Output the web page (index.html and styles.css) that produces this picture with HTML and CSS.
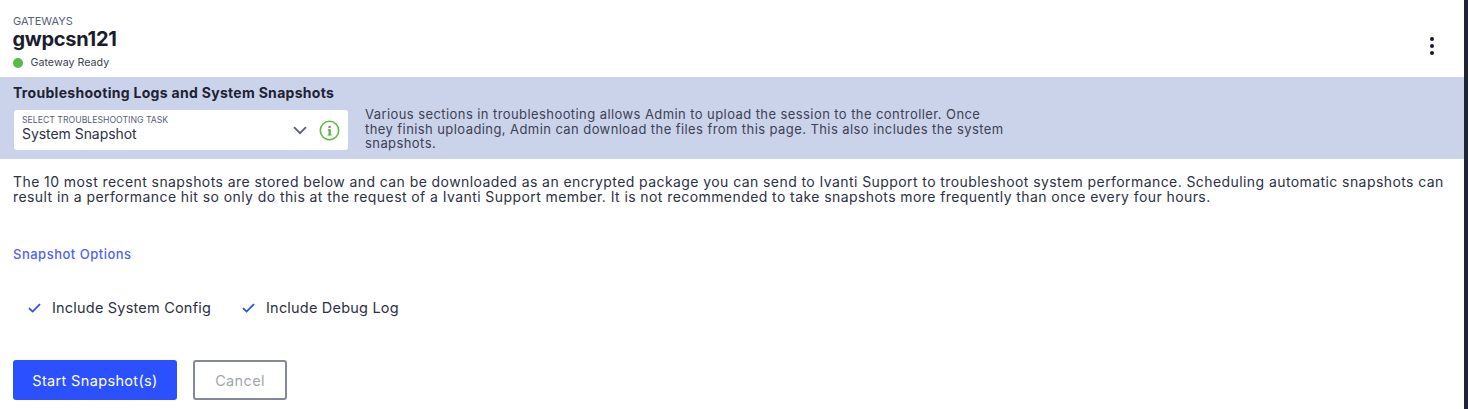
FILE: index.html
```html
<!DOCTYPE html>
<html lang="en">
<head>
<meta charset="utf-8">
<title>gwpcsn121</title>
<link rel="stylesheet" href="styles.css">
</head>
<body>
<div class="page">
  <header class="head">
    <div class="head-text">
      <div class="crumb">GATEWAYS</div>
      <h1 class="name">gwpcsn121</h1>
      <div class="status"><span class="dot"></span><span>Gateway Ready</span></div>
    </div>
    <div class="kebab"><span></span><span></span><span></span></div>
  </header>
  <section class="band">
    <h2 class="band-title">Troubleshooting Logs and System Snapshots</h2>
    <div class="band-row">
      <div class="select">
        <div class="select-text">
          <div class="select-label">SELECT TROUBLESHOOTING TASK</div>
          <div class="select-value">System Snapshot</div>
        </div>
        <svg class="chev" width="14" height="9" viewBox="0 0 14 9"><path d="M1 1.2 7 7.2 13 1.2" fill="none" stroke="#5a6078" stroke-width="1.8"/></svg>
        <svg class="info" width="21" height="21" viewBox="0 0 21 21"><circle cx="10.5" cy="10.5" r="9.2" fill="none" stroke="#5cb946" stroke-width="1.6"/><rect x="9.5" y="5.8" width="2.2" height="2.2" fill="#4ea83a"/><path d="M8.8 9.3h2.9v5.2h1v1.1H8.6v-1.1h1v-4.1h-.8z" fill="#4ea83a"/></svg>
      </div>
      <p class="band-desc">Various sections in troubleshooting allows Admin to upload the session to the controller. Once they finish uploading, Admin can download the files from this page. This also includes the system snapshots.</p>
    </div>
  </section>
  <main class="content">
    <p class="intro">The 10 most recent snapshots are stored below and can be downloaded as an encrypted package you can send to Ivanti Support to troubleshoot system performance. Scheduling automatic snapshots can result in a performance hit so only do this at the request of a Ivanti Support member. It is not recommended to take snapshots more frequently than once every four hours.</p>
    <h3 class="options-title">Snapshot Options</h3>
    <div class="options">
      <div class="option"><svg width="13" height="10" viewBox="0 0 13 10"><path d="M1 5.2 4.6 8.6 12 1.2" fill="none" stroke="#2b50f5" stroke-width="1.8"/></svg><span>Include System Config</span></div>
      <div class="option"><svg width="13" height="10" viewBox="0 0 13 10"><path d="M1 5.2 4.6 8.6 12 1.2" fill="none" stroke="#2b50f5" stroke-width="1.8"/></svg><span>Include Debug Log</span></div>
    </div>
    <div class="actions">
      <button class="btn primary">Start Snapshot(s)</button>
      <button class="btn ghost">Cancel</button>
    </div>
  </main>
</div>
</body>
</html>
```
FILE: styles.css
```css
* { box-sizing: border-box; }
html, body { margin: 0; height: 100%; }
body {
  font-family: Inter, "Liberation Sans", sans-serif;
  color: #1e2233;
  background: #fff;
  overflow: hidden;
}
.page {
  width: 1464px;
  height: 409px;
  background: #fff;
  box-shadow: 4px 0 0 #1f2533;
}
.head {
  height: 77px;
  padding: 15px 30px 0 12.5px;
  display: flex;
  justify-content: space-between;
  align-items: flex-start;
}
.crumb { font-size: 11px; line-height: 12px; color: #5a6078; margin-left: 0.5px; }
.name { margin: 0; font-size: 20px; line-height: 24px; font-weight: 700; color: #1a1d2e; letter-spacing: -0.3px; }
.status { display: flex; align-items: center; gap: 8px; margin-top: 5px; font-size: 10.7px; line-height: 14px; color: #3d4154; }
.dot { width: 10px; height: 10px; border-radius: 50%; background: #57b947; }
.kebab { display: flex; flex-direction: column; gap: 3px; margin-top: 22px; }
.kebab span { width: 4px; height: 4px; border-radius: 50%; background: #16192a; }
.band { height: 82px; background: #cbd3ea; padding: 7px 13px 0; }
.band-title { margin: 0; font-size: 14px; line-height: 17px; font-weight: 700; color: #1e2233; letter-spacing: 0.3px; }
.band-row { display: flex; gap: 17px; margin-top: 9px; }
.select {
  width: 334px;
  height: 40px;
  margin-left: 1px;
  background: #fff;
  border-radius: 3px;
  display: flex;
  align-items: center;
  padding: 0 8px;
}
.select-text { flex: 1; padding-bottom: 3px; }
.select-label { font-size: 8.7px; line-height: 10px; color: #5a6078; }
.select-value { font-size: 14px; line-height: 16px; color: #2d3144; margin-top: 1px; letter-spacing: -0.05px; }
.chev { margin-right: 12px; }
.band-desc { margin: -3px 0 0; width: 640px; font-size: 13px; line-height: 14.5px; letter-spacing: 0.42px; color: #3d4154; }
.content { padding: 15px 13px 0; }
.intro { margin: 0; font-size: 14px; line-height: 15px; letter-spacing: 0.42px; color: #2d3144; }
.options-title { margin: 42px 0 0; font-size: 13px; line-height: 16px; font-weight: 500; letter-spacing: 0.5px; color: #4f62f7; }
.options { display: flex; gap: 31px; margin: 37px 0 0 15px; }
.option { display: flex; align-items: center; gap: 11px; font-size: 14.5px; line-height: 18px; letter-spacing: 0.2px; color: #2d3144; }
.actions { display: flex; gap: 16px; margin-top: 43px; }
.btn { font: inherit; height: 40px; border-radius: 3px; font-size: 14.5px; letter-spacing: 0.35px; }
.primary { width: 164px; background: #2b50ff; border: 0; color: #fff; }
.ghost { width: 94px; background: #fff; border: 2px solid #85889a; color: #a3a6b0; }
```
